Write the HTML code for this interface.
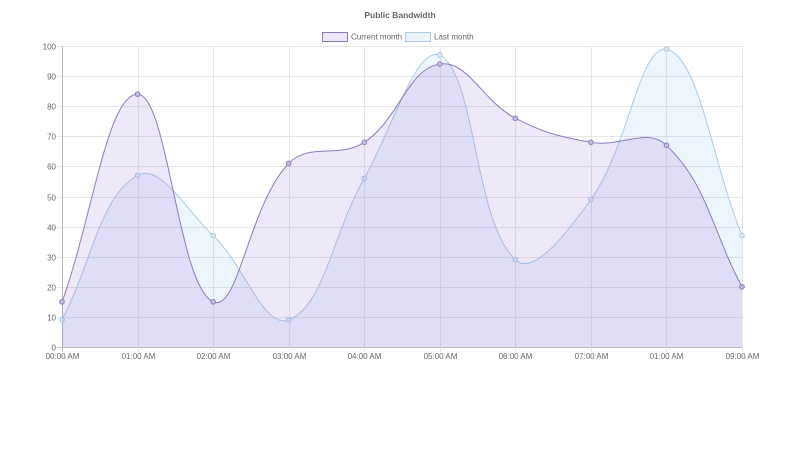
<!DOCTYPE html>
<html><head><meta charset="utf-8"><style>
html,body{margin:0;padding:0;background:#fff;width:800px;height:450px;overflow:hidden}
svg{display:block;font-family:"Liberation Sans",sans-serif}
</style></head><body>
<svg id="c" width="800" height="450" xmlns="http://www.w3.org/2000/svg">
<text x="400" y="18" text-anchor="middle" font-size="8.5" font-weight="bold" fill="#666">Public Bandwidth</text>
<rect x="322.5" y="32.5" width="25" height="9" fill="#ece6f8" stroke="#8a7bbf" stroke-width="1"/>
<text x="351" y="39.5" font-size="8" fill="#666">Current month</text>
<rect x="405.5" y="32.5" width="25" height="9" fill="#eef4fc" stroke="#a9cbe8" stroke-width="1"/>
<text x="434" y="39.5" font-size="8" fill="#666">Last month</text>
<g id="grid"></g>
<g id="data"></g>
</svg>
<script>
var L=62,R=742,T=46,B=347;
var labels=["00:00 AM","01:00 AM","02:00 AM","03:00 AM","04:00 AM","05:00 AM","06:00 AM","07:00 AM","01:00 AM","09:00 AM"];
var g=document.getElementById("grid"),h="";
for(var i=0;i<=10;i++){var y=B-(B-T)*i/10;y=Math.round(y)+0.5;
h+='<line x1="57" x2="'+R+'" y1="'+y+'" y2="'+y+'" stroke="'+(i==0?'#bbb':'#e6e6e6')+'" stroke-width="1"/>';
h+='<text x="56" y="'+(y+3)+'" text-anchor="end" font-size="8" fill="#666">'+(i*10)+'</text>';}
for(var i=0;i<10;i++){var x=L+(R-L)*i/9;x=Math.round(x)+0.5;
h+='<line x1="'+x+'" x2="'+x+'" y1="'+T+'" y2="'+(B+5)+'" stroke="'+(i==0?'#bbb':'#e6e6e6')+'" stroke-width="1"/>';
h+='<text x="'+x+'" y="'+(B+12)+'" text-anchor="middle" font-size="8" fill="#666">'+labels[i]+'</text>';}
g.innerHTML=h;
function pts(d){return d.map(function(v,i){return [L+(R-L)*i/9,B-(B-T)*v/100];});}
function path(p){var t=0.4,cps=[];
for(var i=0;i<p.length;i++){var pr=p[i-1]||p[i],c=p[i],nx=p[i+1]||p[i];
var d01=Math.hypot(c[0]-pr[0],c[1]-pr[1]),d12=Math.hypot(nx[0]-c[0],nx[1]-c[1]);
var s=d01+d12||1,fa=t*d01/s,fb=t*d12/s;
var a=[c[0]-fa*(nx[0]-pr[0]),c[1]-fa*(nx[1]-pr[1])],b=[c[0]+fb*(nx[0]-pr[0]),c[1]+fb*(nx[1]-pr[1])];
a[1]=Math.max(T,Math.min(B,a[1]));b[1]=Math.max(T,Math.min(B,b[1]));
a[0]=Math.max(L,Math.min(R,a[0]));b[0]=Math.max(L,Math.min(R,b[0]));cps.push([a,b]);}
var s="M"+p[0][0]+","+p[0][1];
for(var i=1;i<p.length;i++){s+=" C"+cps[i-1][1][0]+","+cps[i-1][1][1]+" "+cps[i][0][0]+","+cps[i][0][1]+" "+p[i][0]+","+p[i][1];}
return s;}
var cur=pts([15,84,15,61,68,94,76,68,67,20]),last=pts([9,57,37,9,56,97,29,49,99,37]);
function ds(p,fill,stroke,pf){var d=path(p),o='<path d="'+d+' L'+R+','+B+' L'+L+','+B+' Z" fill="'+fill+'"/>';
o+='<path d="'+d+'" fill="none" stroke="'+stroke+'" stroke-width="1"/>';
p.forEach(function(q){o+='<circle cx="'+q[0]+'" cy="'+q[1]+'" r="2.3" fill="'+pf+'" stroke="'+stroke+'" stroke-width="1"/>';});return o;}
document.getElementById("data").innerHTML=ds(last,"rgba(54,140,235,0.09)","#a9cbe8","#dbe8f6")+ds(cur,"rgba(120,80,200,0.13)","#8a7bbf","#c8bde6");
</script>
</body></html>
